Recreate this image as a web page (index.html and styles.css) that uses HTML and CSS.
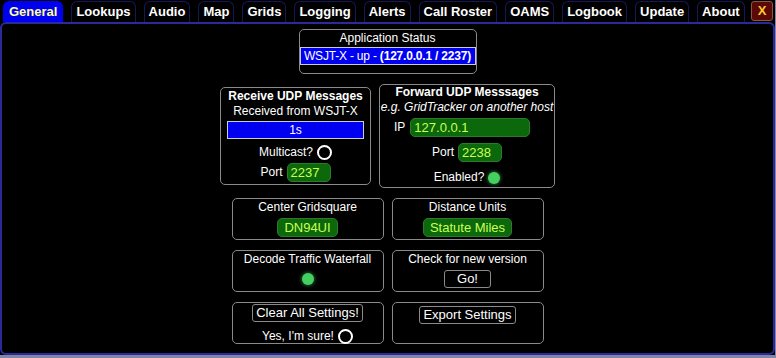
FILE: index.html
```html
<!DOCTYPE html>
<html lang="en">
<head>
  <meta charset="UTF-8">
  <title>Settings</title>
  <link rel="stylesheet" href="styles.css">
</head>
<body>
  <div class="app">
    <div class="tabs">
      <div class="tab active">General</div>
      <div class="tab">Lookups</div>
      <div class="tab">Audio</div>
      <div class="tab">Map</div>
      <div class="tab">Grids</div>
      <div class="tab">Logging</div>
      <div class="tab">Alerts</div>
      <div class="tab">Call Roster</div>
      <div class="tab">OAMS</div>
      <div class="tab">Logbook</div>
      <div class="tab">Update</div>
      <div class="tab">About</div>
      <div class="tab close">X</div>
    </div>

    <div class="panel">
      <div class="box status-box">
        <div>Application Status</div>
        <div class="bar">WSJT-X - up - <b>(127.0.0.1 / 2237)</b></div>
      </div>

      <div class="udp-row">
        <div class="box receive">
          <div class="title">Receive UDP Messages</div>
          <div>Received from WSJT-X</div>
          <div class="bar">1s</div>
          <div class="field">Multicast? <span class="check"></span></div>
          <div class="field">Port <span class="input">2237</span></div>
        </div>
        <div class="box forward">
          <div class="title">Forward UDP Messsages</div>
          <div class="hint">e.g. GridTracker on another host</div>
          <div class="field ip">IP <span class="input wide">127.0.0.1</span></div>
          <div class="field">Port <span class="input">2238</span></div>
          <div class="field">Enabled? <span class="dot"></span></div>
        </div>
      </div>

      <div class="grid">
        <div class="box cell">
          <div>Center Gridsquare</div>
          <span class="input pad">DN94UI</span>
        </div>
        <div class="box cell">
          <div>Distance Units</div>
          <span class="input pad">Statute Miles</span>
        </div>
        <div class="box cell">
          <div>Decode Traffic Waterfall</div>
          <span class="dot"></span>
        </div>
        <div class="box cell">
          <div>Check for new version</div>
          <span class="btn go">Go!</span>
        </div>
        <div class="box cell">
          <span class="btn">Clear All Settings!</span>
          <div class="field">Yes, I'm sure! <span class="check"></span></div>
        </div>
        <div class="box cell export">
          <span class="btn">Export Settings</span>
        </div>
      </div>
    </div>
  </div>
</body>
</html>
```

FILE: styles.css
```css
:root {
  --panel-border: #2a2a9a;
  --box-border: #8a8a8a;
  --blue: #0000f0;
  --green-bg: #0b680b;
  --green-text: #ccff55;
}

body {
  margin: 0;
  background: #8484a8;
  font-family: 'Liberation Sans', Arial, sans-serif;
  font-size: 12px;
  color: #fff;
}

.app {
  width: 775px;
  height: 355px;
  background: #000;
  display: flex;
  flex-direction: column;
  overflow: hidden;
}

.tabs {
  display: flex;
  gap: 8px;
  padding: 1px 0 0 3px;
  background: #000;
  white-space: nowrap;
}

.tab {
  flex-shrink: 0;
  font-size: 13px;
  font-weight: bold;
  line-height: 20px;
  padding: 0 4px;
  border: 1px solid #16165a;
  border-bottom: none;
  border-radius: 6px 6px 0 0;
}

.tab.active {
  padding: 0 5px;
  background: var(--blue);
  color: #ffff99;
  border-color: var(--blue);
}

.tab.close {
  margin-left: -2px;
  padding: 0 6px;
  background: #5a0808;
  color: #ffc830;
  border: 1px solid #8a5a3a;
  border-radius: 3px;
  line-height: 18px;
  align-self: flex-start;
}

.panel {
  flex: 1;
  min-height: 0;
  border: 2px solid var(--panel-border);
  border-radius: 6px;
  display: flex;
  flex-direction: column;
  align-items: center;
}

.box {
  border: 1px solid var(--box-border);
  border-radius: 5px;
  text-align: center;
  line-height: 15px;
  box-sizing: border-box;
}

.status-box {
  width: 178px;
  margin-top: 5px;
  padding: 1px 0 8px;
}

.status-box .bar {
  white-space: nowrap;
  letter-spacing: -0.2px;
  margin-top: 1px;
}

.bar {
  background: var(--blue);
  border: 1px solid #ccc;
  line-height: 16px;
}

.udp-row {
  display: flex;
  align-items: center;
  gap: 8px;
  margin-top: 10px;
}

.receive {
  width: 151px;
  height: 98px;
  padding: 1px 6px 0;
}

.receive .bar {
  margin: 2px 0 4px;
}

.forward {
  width: 176px;
  height: 104px;
}

.title {
  font-weight: bold;
}

.hint {
  font-style: italic;
  margin-bottom: 3px;
  white-space: nowrap;
}

.field {
  display: flex;
  justify-content: center;
  align-items: center;
  gap: 4px;
  min-height: 19px;
  margin-bottom: 1px;
}

.forward .field {
  margin-bottom: 6px;
}

.forward .ip {
  padding-left: 14px;
  gap: 5px;
  justify-content: flex-start;
}

.input {
  display: inline-block;
  background: var(--green-bg);
  color: var(--green-text);
  border: 1px solid #2d7a2d;
  border-radius: 5px;
  font-size: 13px;
  line-height: 17px;
  padding: 0 3px;
  min-width: 36px;
  text-align: left;
}

.input.pad {
  padding: 0 6px;
}

.input.wide {
  width: 112px;
}

.check {
  display: inline-block;
  width: 11px;
  height: 11px;
  border: 2px solid #fff;
  border-radius: 50%;
}

.dot {
  display: inline-block;
  width: 12px;
  height: 12px;
  border-radius: 50%;
  background: #44d060;
  box-shadow: 0 0 4px #3f9a50;
}

.grid {
  display: grid;
  grid-template-columns: 152px 152px;
  grid-auto-rows: 42px;
  column-gap: 8px;
  row-gap: 10px;
  margin-top: 10px;
}

.cell {
  display: flex;
  flex-direction: column;
  align-items: center;
  gap: 3px;
  padding-top: 1px;
}

.cell .dot {
  margin-top: 3px;
}

.btn {
  display: inline-block;
  border: 1px solid var(--box-border);
  border-radius: 3px;
  font-size: 13px;
  line-height: 16px;
  padding: 0 3px;
}

.btn.go {
  padding: 0 12px;
}

.export {
  padding-top: 3px;
}

.cell .btn + .field {
  margin-top: 2px;
}
```
